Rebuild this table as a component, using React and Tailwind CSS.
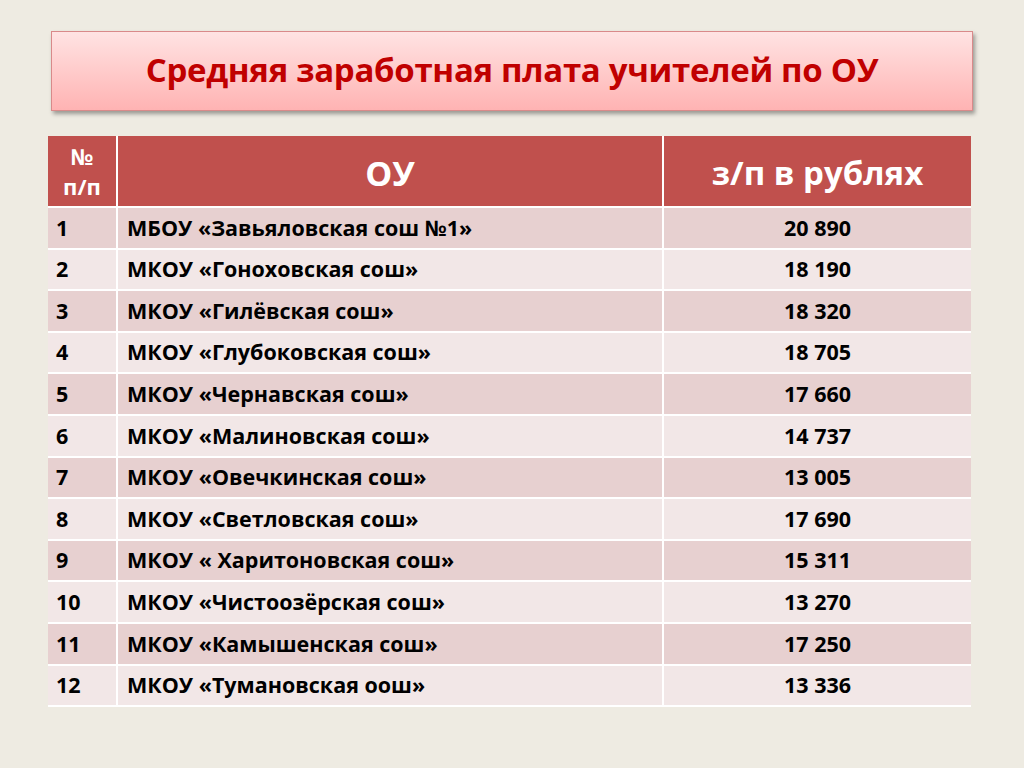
const rows = [
  ['1', 'МБОУ «Завьяловская сош №1»', '20 890'],
  ['2', 'МКОУ «Гоноховская сош»', '18 190'],
  ['3', 'МКОУ «Гилёвская сош»', '18 320'],
  ['4', 'МКОУ «Глубоковская сош»', '18 705'],
  ['5', 'МКОУ «Чернавская сош»', '17 660'],
  ['6', 'МКОУ «Малиновская сош»', '14 737'],
  ['7', 'МКОУ «Овечкинская сош»', '13 005'],
  ['8', 'МКОУ «Светловская сош»', '17 690'],
  ['9', 'МКОУ « Харитоновская сош»', '15 311'],
  ['10', 'МКОУ «Чистоозёрская сош»', '13 270'],
  ['11', 'МКОУ «Камышенская сош»', '17 250'],
  ['12', 'МКОУ «Тумановская оош»', '13 336'],
];

export default function App() {
  return (
    <div className="w-[1024px] h-[768px] bg-[#eeebe2] pt-[31px] font-['Open_Sans',sans-serif]">
      {/* title */}
      <div className="mx-[51px] h-[80px] flex items-center justify-center border border-[#d98a8a] bg-gradient-to-b from-[#ffe3e3] to-[#ffb3b3] shadow-[2px_3px_4px_rgba(0,0,0,0.35)]">
        <h1 className="text-[#c00000] font-bold text-[33px] tracking-[-0.3px] pb-[2px]">
          Средняя заработная плата учителей по ОУ
        </h1>
      </div>

      {/* table */}
      <table className="mt-[25px] ml-[48px] w-[923px] border-collapse table-fixed">
        <colgroup>
          <col className="w-[69px]" />
          <col className="w-[546px]" />
          <col />
        </colgroup>
        <thead>
          <tr className="h-[71px] bg-[#c0504d] text-white font-bold">
            <th className="border-2 border-white border-t-0 border-l-0 text-[22px] leading-[30px] font-bold">
              <div>№</div>
              <div>п/п</div>
            </th>
            <th className="border-2 border-white border-t-0 text-[34px] font-bold pt-[4px]">ОУ</th>
            <th className="border-2 border-white border-t-0 border-r-0 text-[33px] font-bold pt-[4px]">з/п в рублях</th>
          </tr>
        </thead>
        <tbody>
          {rows.map((r, i) => (
            <tr
              key={r[0]}
              className={(i % 2 === 0 ? 'bg-[#e7d0d0]' : 'bg-[#f2e7e7]') + ' h-[41.6px] text-[21.5px] font-bold text-black'}
            >
              <td className="border-2 border-white border-l-0 pl-[8px]">{r[0]}</td>
              <td className="border-2 border-white pl-[9px]">{r[1]}</td>
              <td className="border-2 border-white border-r-0 text-center">{r[2]}</td>
            </tr>
          ))}
        </tbody>
      </table>
    </div>
  );
}
